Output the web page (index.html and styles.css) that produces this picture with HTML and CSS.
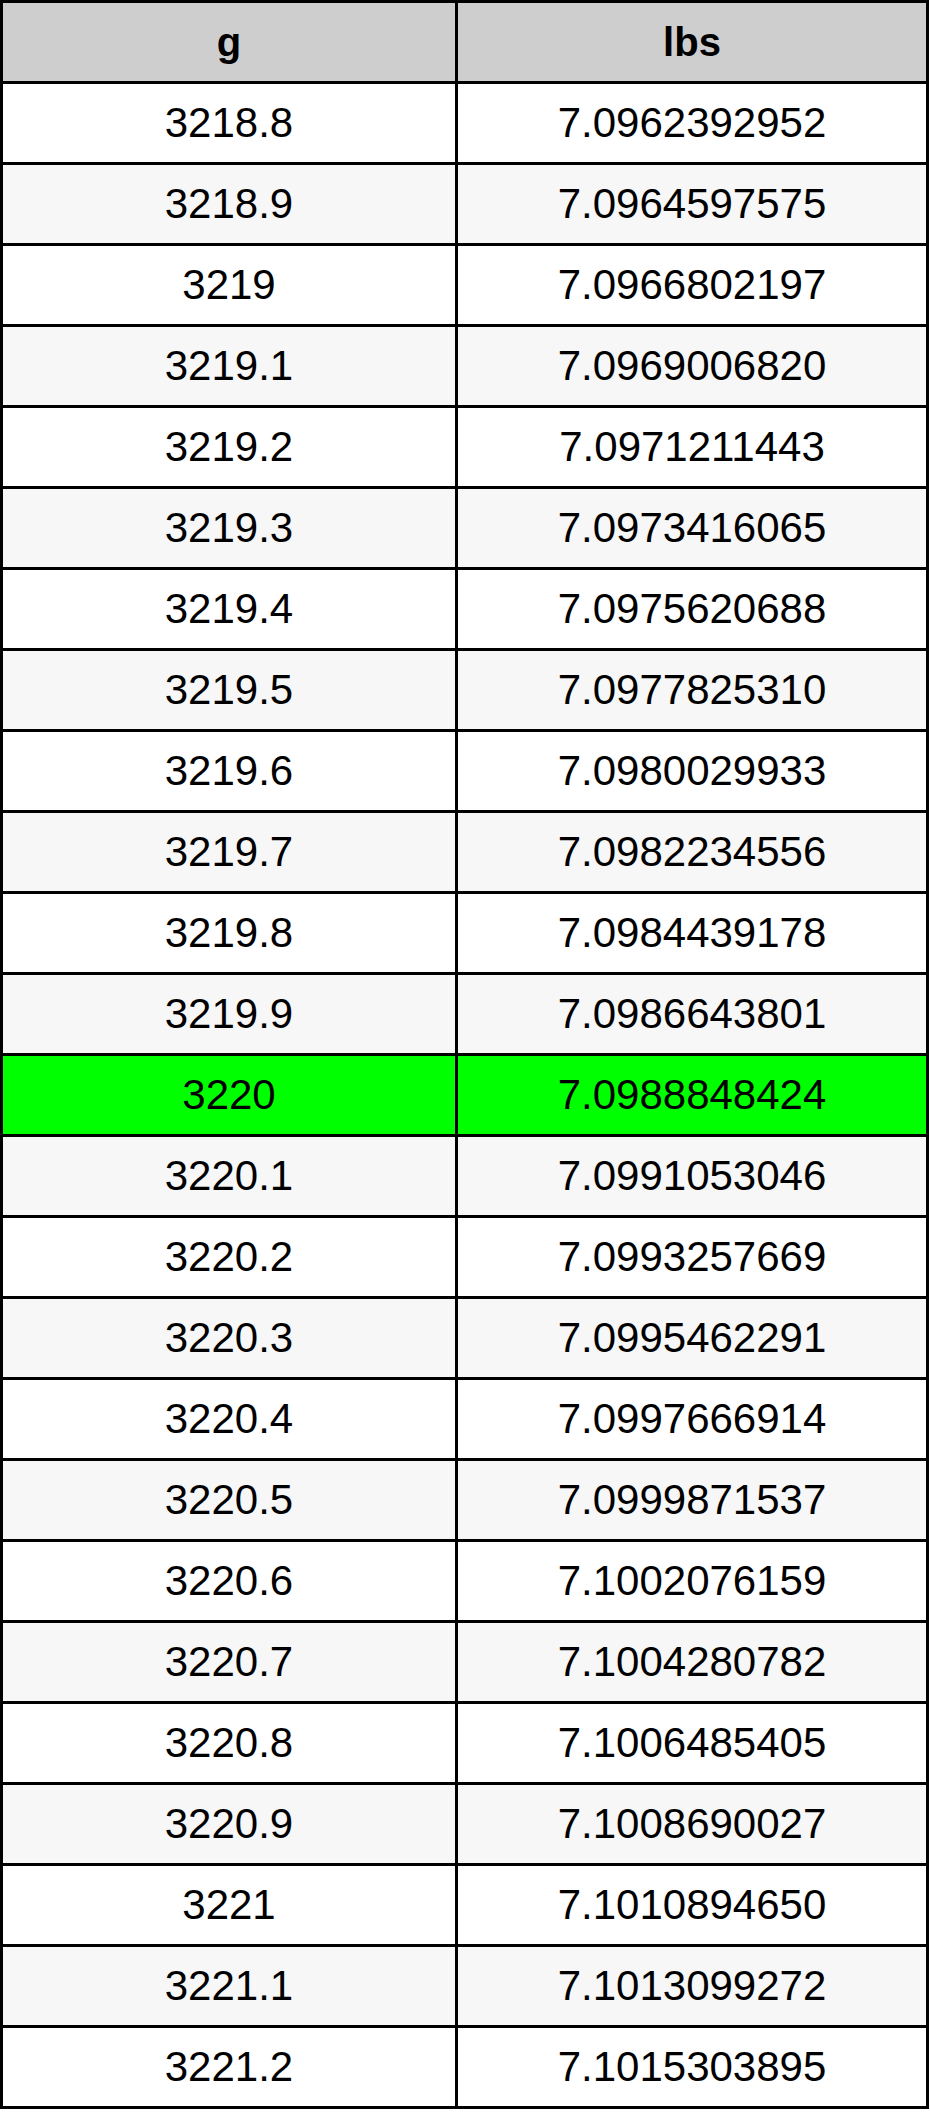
FILE: index.html
```html
<!DOCTYPE html>
<html>
<head>
<meta charset="utf-8">
<link rel="stylesheet" href="styles.css">
</head>
<body>
<table class="conv">
<thead>
<tr><th>g</th><th>lbs</th></tr>
</thead>
<tbody>
<tr><td>3218.8</td><td>7.0962392952</td></tr>
<tr><td>3218.9</td><td>7.0964597575</td></tr>
<tr><td>3219</td><td>7.0966802197</td></tr>
<tr><td>3219.1</td><td>7.0969006820</td></tr>
<tr><td>3219.2</td><td>7.0971211443</td></tr>
<tr><td>3219.3</td><td>7.0973416065</td></tr>
<tr><td>3219.4</td><td>7.0975620688</td></tr>
<tr><td>3219.5</td><td>7.0977825310</td></tr>
<tr><td>3219.6</td><td>7.0980029933</td></tr>
<tr><td>3219.7</td><td>7.0982234556</td></tr>
<tr><td>3219.8</td><td>7.0984439178</td></tr>
<tr><td>3219.9</td><td>7.0986643801</td></tr>
<tr class="hl"><td>3220</td><td>7.0988848424</td></tr>
<tr><td>3220.1</td><td>7.0991053046</td></tr>
<tr><td>3220.2</td><td>7.0993257669</td></tr>
<tr><td>3220.3</td><td>7.0995462291</td></tr>
<tr><td>3220.4</td><td>7.0997666914</td></tr>
<tr><td>3220.5</td><td>7.0999871537</td></tr>
<tr><td>3220.6</td><td>7.1002076159</td></tr>
<tr><td>3220.7</td><td>7.1004280782</td></tr>
<tr><td>3220.8</td><td>7.1006485405</td></tr>
<tr><td>3220.9</td><td>7.1008690027</td></tr>
<tr><td>3221</td><td>7.1010894650</td></tr>
<tr><td>3221.1</td><td>7.1013099272</td></tr>
<tr><td>3221.2</td><td>7.1015303895</td></tr>
</tbody>
</table>
</body>
</html>
```
FILE: styles.css
```css
html, body {
  margin: 0;
  padding: 0;
  background: #ffffff;
}
.conv {
  border-collapse: collapse;
  width: 929px;
  table-layout: fixed;
  font-family: "Liberation Sans", Arial, sans-serif;
  font-size: 42px;
  color: #000;
}
.conv th, .conv td {
  border: 3px solid #000;
  height: 78px;
  padding: 0;
  text-align: center;
  vertical-align: middle;
  box-sizing: content-box;
}
.conv th {
  background: #cecece;
  font-weight: bold;
  font-size: 40px;
}
.conv th:first-child, .conv td:first-child {
  width: 452px;
}
.conv tbody tr:nth-child(odd) td {
  background: #ffffff;
}
.conv tbody tr:nth-child(even) td {
  background: #f7f7f7;
}
.conv tbody tr.hl td {
  background: #00ff00;
}
```
